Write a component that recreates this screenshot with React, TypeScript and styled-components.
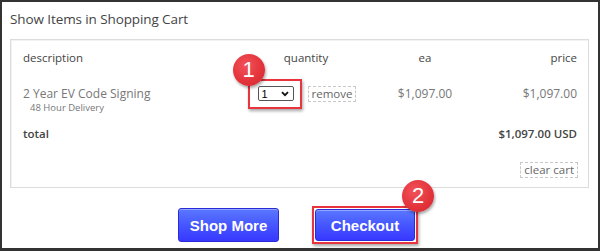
import styled, { createGlobalStyle } from "styled-components";

const GlobalStyle = createGlobalStyle`
  html, body {
    margin: 0;
    padding: 0;
    background: #ffffff;
  }
`;

const Frame = styled.div`
  box-sizing: border-box;
  width: 600px;
  height: 251px;
  border: 2px solid #333333;
  border-bottom-width: 3px;
  padding: 8px 10px 0 8px;
  font-family: "Open Sans", "Liberation Sans", sans-serif;
  color: #444444;
  background: #ffffff;
  overflow: hidden;
`;

const Title = styled.div`
  font-size: 13.5px;
  line-height: 18px;
  color: #444444;
  letter-spacing: -0.1px;
`;

const CartBox = styled.div`
  box-sizing: border-box;
  margin-top: 11px;
  width: 579px;
  height: 149px;
  border: 1px solid #dcdcdc;
  box-shadow: inset 1px 1px 0 #f2f2f2;
  padding: 10px 11px 0 12px;
`;

const Row = styled.div<{ $pad?: string }>`
  display: grid;
  grid-template-columns: 223px 120px 118px 1fr;
  align-items: start;
  padding: ${(p) => p.$pad || "0"};
`;

const Cell = styled.div<{
  $align?: "left" | "center" | "right";
  $weight?: number;
  $color?: string;
  $size?: string;
  $top?: string;
}>`
  text-align: ${(p) => p.$align || "left"};
  font-size: ${(p) => p.$size || "11.5px"};
  line-height: 15px;
  font-weight: ${(p) => p.$weight || 400};
  color: ${(p) => p.$color || "#444444"};
  padding-top: ${(p) => p.$top || "0"};
  white-space: nowrap;
`;

const SubLine = styled.div`
  font-size: 9.5px;
  line-height: 13px;
  color: #777777;
  padding-left: 7px;
`;

const QtyCell = styled.div`
  display: flex;
  align-items: center;
  justify-content: center;
  gap: 12px;
`;

const Highlight = styled.div`
  position: relative;
  box-sizing: border-box;
  border: 2px solid #e8353d;
  box-shadow: 1px 2px 3px rgba(0, 0, 0, 0.35);
  padding: 5px 6px 6px 8px;
  margin-left: -8px;
  margin-right: -6px;
`;

const Badge = styled.div<{ $left?: string; $top?: string; $right?: string }>`
  position: absolute;
  width: 32px;
  height: 32px;
  border-radius: 50%;
  background: radial-gradient(circle at 40% 35%, #f2525a 0%, #e2323a 60%, #d02a31 100%);
  box-shadow: 1px 2px 3px rgba(0, 0, 0, 0.35);
  color: #ffffff;
  font-family: "Liberation Sans", Arial, sans-serif;
  font-size: 22px;
  line-height: 32px;
  text-align: center;
  left: ${(p) => p.$left || "auto"};
  right: ${(p) => p.$right || "auto"};
  top: ${(p) => p.$top || "auto"};
`;

const QtySelect = styled.div`
  box-sizing: border-box;
  width: 36px;
  height: 15px;
  border: 1px solid #555555;
  border-radius: 2px;
  display: flex;
  align-items: center;
  justify-content: space-between;
  padding: 0 4px 0 3px;
  font-family: "Liberation Sans", Arial, sans-serif;
  font-size: 11px;
  color: #000000;
  background: #ffffff;
`;

const DashedLink = styled.span`
  border: 1px dashed #c8c8c8;
  padding: 0 3px;
  font-size: 11.5px;
  line-height: 14px;
  color: #666666;
`;

const ClearRow = styled.div`
  display: flex;
  justify-content: flex-end;
  margin-top: 21px;
  margin-right: -1px;
`;

const ButtonBar = styled.div`
  display: flex;
  justify-content: center;
  align-items: center;
  gap: 33px;
  margin-top: 18px;
  padding-right: 2px;
`;

const BlueButton = styled.button<{ $w?: number; $h?: number }>`
  box-sizing: border-box;
  width: ${(p) => p.$w || 101}px;
  height: ${(p) => p.$h || 34}px;
  border: 1px solid #2a2ad8;
  border-radius: 3px;
  background: linear-gradient(to bottom, #5a78ff 0%, #4656ff 50%, #3838ff 100%);
  box-shadow: inset 0 1px 0 rgba(255, 255, 255, 0.35);
  color: #ffffff;
  font-family: "Liberation Sans", Arial, sans-serif;
  font-weight: 700;
  font-size: 15px;
  cursor: pointer;
  padding: 0;
`;

const ButtonHighlight = styled(Highlight)`
  padding: 1px;
  margin: 0;
`;

const Chevron = () => (
  <svg width="8" height="6" viewBox="0 0 8 6">
    <path d="M1 1.2 L4 4.2 L7 1.2" stroke="#111" strokeWidth="1.8" fill="none" />
  </svg>
);

export default function App() {
  return (
    <>
      <GlobalStyle />
      <Frame>
        <Title>Show Items in Shopping Cart</Title>
        <CartBox>
          <Row $pad="0 0 14px 0">
            <Cell $weight={500}>description</Cell>
            <Cell $align="center" $weight={500}>quantity</Cell>
            <Cell $align="center" $weight={500}>ea</Cell>
            <Cell $align="right" $weight={500}>price</Cell>
          </Row>
          <Row>
            <div>
              <Cell $color="#777777" $size="12px" $top="7px">2 Year EV Code Signing</Cell>
              <SubLine>48 Hour Delivery</SubLine>
            </div>
            <QtyCell>
              <Highlight>
                <Badge $left="-17px" $top="-27px">1</Badge>
                <QtySelect>
                  <span>1</span>
                  <Chevron />
                </QtySelect>
              </Highlight>
              <DashedLink>remove</DashedLink>
            </QtyCell>
            <Cell $align="center" $color="#777777" $size="12px" $top="7px">$1,097.00</Cell>
            <Cell $align="right" $color="#777777" $size="12px" $top="7px">$1,097.00</Cell>
          </Row>
          <Row $pad="12px 0 0 0">
            <Cell $weight={600}>total</Cell>
            <div />
            <div />
            <Cell $align="right" $weight={600}>$1,097.00 USD</Cell>
          </Row>
          <ClearRow>
            <DashedLink>clear cart</DashedLink>
          </ClearRow>
        </CartBox>
        <ButtonBar>
          <BlueButton>Shop More</BlueButton>
          <ButtonHighlight>
            <Badge $right="-18px" $top="-28px">2</Badge>
            <BlueButton $w={100} $h={32}>Checkout</BlueButton>
          </ButtonHighlight>
        </ButtonBar>
      </Frame>
    </>
  );
}
